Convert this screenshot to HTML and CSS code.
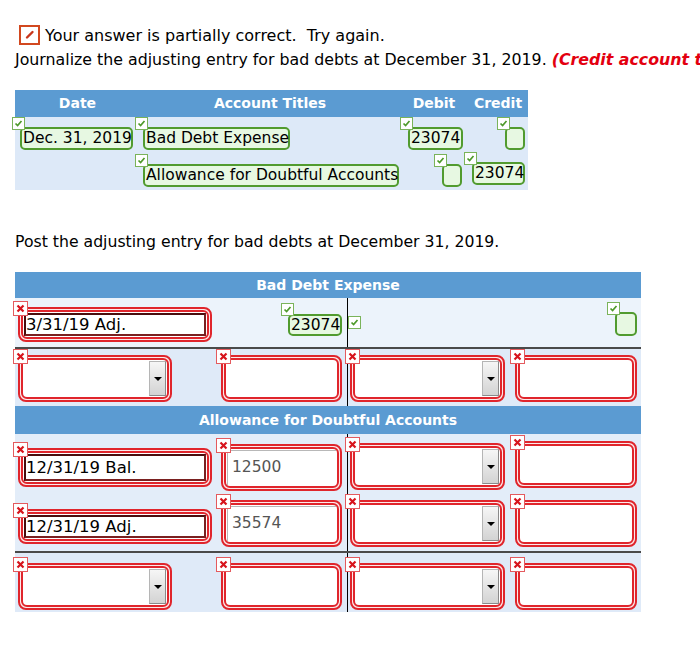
FILE: index.html
```html
<!DOCTYPE html>
<html>
<head>
<meta charset="utf-8">
<link rel="stylesheet" href="styles.css">
</head>
<body>
<div class="page">
  <div class="status">
    <span class="edit-ico"><svg width="17" height="16" viewBox="0 0 17 16"><line x1="6" y1="10.5" x2="11.5" y2="5" stroke="#c8361c" stroke-width="2.4" stroke-linecap="round"/></svg></span>
    <span>Your answer is partially correct.&nbsp; Try again.</span>
  </div>
  <div class="q">Journalize the adjusting entry for bad debts at December 31, 2019. <em class="hint">(Credit account titles are automatically indented when amount is entered. Do not indent manually.)</em></div>

  <div class="journal">
    <div class="jh">Date</div>
    <div class="jh">Account Titles</div>
    <div class="jh">Debit</div>
    <div class="jh">Credit</div>

    <div class="jc"><div class="g r1 w-date ml5"><i class="ok"></i>Dec. 31, 2019</div></div>
    <div class="jc"><div class="g r1 w-bad ml3"><i class="ok"></i>Bad Debt Expense</div></div>
    <div class="jc"><div class="g r1 w-deb1 ml8"><i class="ok"></i>23074</div></div>
    <div class="jc"><div class="g r1 w-cr1 ml37"><i class="ok"></i></div></div>

    <div class="jc"></div>
    <div class="jc"><div class="g r2 w-allow ml3"><i class="ok"></i>Allowance for Doubtful Accounts</div></div>
    <div class="jc"><div class="g r2 w-deb2 ml42"><i class="ok"></i></div></div>
    <div class="jc"><div class="g r2b w-cr2 ml4"><i class="ok"></i>23074</div></div>
  </div>

  <p class="post">Post the adjusting entry for bad debts at December 31, 2019.</p>

  <div class="tacct">
    <div class="th">Bad Debt Expense</div>

    <div class="trow ra">
      <div class="tc c1"><div class="ring w-txt mb5"><i class="bad"></i><div class="ring2"><div class="txt">3/31/19 Adj.</div></div></div></div>
      <div class="tc c2"><div class="g tg w-tg"><i class="ok ok-t"></i>23074</div></div>
      <div class="tc c3"><i class="ok ok-line"></i></div>
      <div class="tc c4"><div class="g tg2"><i class="ok"></i></div></div>
    </div>
    <div class="tline"></div>

    <div class="trow rb">
      <div class="tc c1"><div class="ring w-sel1 mb4"><i class="bad"></i><div class="ring2"><div class="sel"><span class="btn"></span></div></div></div></div>
      <div class="tc c2"><div class="ring w-mid mb4"><i class="bad"></i><div class="ring2"><div class="inp"></div></div></div></div>
      <div class="tc c3"><div class="ring w-sel2 mb4"><i class="bad"></i><div class="ring2"><div class="sel"><span class="btn"></span></div></div></div></div>
      <div class="tc c4"><div class="ring w-right mb4"><i class="bad"></i><div class="ring2"><div class="inp"></div></div></div></div>
    </div>

    <div class="th th2">Allowance for Doubtful Accounts</div>

    <div class="trow rc">
      <div class="tc c1"><div class="ring w-txt mb5"><i class="bad"></i><div class="ring2"><div class="txt tall">12/31/19 Bal.</div></div></div></div>
      <div class="tc c2"><div class="ring w-mid mb1"><i class="bad"></i><div class="ring2"><div class="inp val">12500</div></div></div></div>
      <div class="tc c3"><div class="ring w-sel2 mb2"><i class="bad"></i><div class="ring2"><div class="sel"><span class="btn"></span></div></div></div></div>
      <div class="tc c4"><div class="ring w-right mb4"><i class="bad"></i><div class="ring2"><div class="inp"></div></div></div></div>
    </div>

    <div class="trow rd">
      <div class="tc c1"><div class="ring w-txt mb7"><i class="bad"></i><div class="ring2"><div class="txt">12/31/19 Adj.</div></div></div></div>
      <div class="tc c2"><div class="ring w-mid mb4"><i class="bad"></i><div class="ring2"><div class="inp val">35574</div></div></div></div>
      <div class="tc c3"><div class="ring w-sel2 mb4"><i class="bad"></i><div class="ring2"><div class="sel"><span class="btn"></span></div></div></div></div>
      <div class="tc c4"><div class="ring w-right mb4"><i class="bad"></i><div class="ring2"><div class="inp"></div></div></div></div>
    </div>
    <div class="tline"></div>

    <div class="trow re">
      <div class="tc c1"><div class="ring w-sel1 mb2"><i class="bad"></i><div class="ring2"><div class="sel"><span class="btn"></span></div></div></div></div>
      <div class="tc c2"><div class="ring w-mid mb2"><i class="bad"></i><div class="ring2"><div class="inp"></div></div></div></div>
      <div class="tc c3"><div class="ring w-sel2 mb2"><i class="bad"></i><div class="ring2"><div class="sel"><span class="btn"></span></div></div></div></div>
      <div class="tc c4"><div class="ring w-right mb2"><i class="bad"></i><div class="ring2"><div class="inp"></div></div></div></div>
    </div>
  </div>
</div>
</body>
</html>
```

FILE: styles.css
```css
html, body {
  margin: 0;
  padding: 0;
  background: #fff;
  overflow: hidden;
}
body {
  font-family: "DejaVu Sans", Verdana, sans-serif;
  color: #000;
}
.page {
  width: 700px;
  height: 649px;
  overflow: hidden;
}

/* status line */
.status {
  display: flex;
  align-items: center;
  gap: 5px;
  height: 20px;
  margin: 25px 0 0 19px;
  font-size: 16px;
  white-space: nowrap;
}
.edit-ico {
  width: 21px;
  height: 20px;
  box-sizing: border-box;
  border: 2px solid #d2481f;
  display: flex;
  background: #fff;
}
.q {
  margin: 5px 0 0 15px;
  height: 20px;
  line-height: 20px;
  font-size: 15.8px;
  white-space: nowrap;
}
.hint {
  color: #e3000f;
  font-weight: bold;
  font-style: italic;
}

/* journal table */
.journal {
  display: grid;
  grid-template-columns: 125px 260px 68px 60px;
  grid-template-rows: 27px 36px 37px;
  width: 513px;
  margin: 20px 0 0 15px;
  background: #dde9f8;
}
.jh {
  background: #5b9bd2;
  color: #fff;
  font-weight: bold;
  font-size: 14px;
  line-height: 27px;
  text-align: center;
}
.jc {
  position: relative;
}

/* green (correct) field */
.g {
  position: relative;
  box-sizing: border-box;
  height: 23px;
  border: 2px solid #519b2f;
  border-radius: 5px;
  background: #e7f8e2;
  font-size: 15.5px;
  line-height: 19px;
  padding-left: 1px;
  white-space: nowrap;
}
.r1 { margin-top: 10px; }
.r2 { margin-top: 11px; }
.r2b { margin-top: 9px; }
.w-date { width: 113px; }
.w-bad { width: 147px; }
.w-deb1 { width: 55px; }
.w-cr1 { width: 20px; }
.w-allow { width: 256px; }
.w-deb2 { width: 20px; }
.w-cr2 { width: 53px; }
.ml3 { margin-left: 3px; }
.ml4 { margin-left: 4px; }
.ml5 { margin-left: 5px; }
.ml8 { margin-left: 8px; }
.ml37 { margin-left: 37px; }
.ml42 { margin-left: 42px; }

.ok {
  position: absolute;
  left: -10px;
  top: -12px;
  width: 13px;
  height: 13px;
  box-sizing: border-box;
  border: 1px solid #7ab35a;
  background: #fff url("data:image/svg+xml;utf8,<svg xmlns='http://www.w3.org/2000/svg' width='11' height='11' viewBox='0 0 11 11'><polyline points='2.5,5.5 4.6,7.6 8.5,3' fill='none' stroke='%234e9a2a' stroke-width='1.7'/></svg>") no-repeat center;
}

.post {
  margin: 42px 0 0 15px;
  height: 20px;
  line-height: 20px;
  font-size: 15.7px;
}

/* T account */
.tacct {
  width: 626px;
  margin: 20px 0 0 15px;
}
.th {
  height: 26px;
  line-height: 26px;
  background: #5b9bd2;
  color: #fff;
  font-weight: bold;
  font-size: 14px;
  text-align: center;
}
.th2 {
  height: 28px;
  line-height: 28px;
}
.tline {
  height: 2px;
  background: #4a4a4a;
}
.trow {
  display: grid;
  grid-template-columns: 200px 132px 163px 131px;
}
.ra { height: 49px; background: #ecf3fb; }
.rb { height: 57px; background: #dfeaf8; }
.rc { height: 58px; background: #e3edf9; }
.rd { height: 59px; background: #e3edf9; }
.re { height: 59px; background: #dfeaf8; }

.tc {
  display: flex;
  align-items: flex-end;
  box-sizing: border-box;
}
.c1 { padding-left: 3px; }
.c2 { padding-left: 6px; }
.c3 { padding-left: 2px; border-left: 1px solid #000; }
.c4 { padding-left: 5px; }

/* red (incorrect) field */
.ring {
  position: relative;
  box-sizing: border-box;
  border: 2px solid #e0252c;
  border-radius: 8px;
  padding: 1px;
  background: #fce9ea;
}
.ring2 {
  border: 2px solid #e0252c;
  border-radius: 6px;
  padding: 1px;
  background: #fff;
}
.w-txt { width: 194px; }
.w-sel1 { width: 154px; }
.w-mid { width: 121px; }
.w-sel2 { width: 155px; }
.w-right { width: 122px; }
.mb1 { margin-bottom: 1px; }
.mb2 { margin-bottom: 2px; }
.mb4 { margin-bottom: 4px; }
.mb5 { margin-bottom: 5px; }
.mb7 { margin-bottom: 7px; }

.bad {
  position: absolute;
  left: -7px;
  top: -8px;
  width: 15px;
  height: 15px;
  box-sizing: border-box;
  border: 1px solid #e45a5e;
  background: #fff url("data:image/svg+xml;utf8,<svg xmlns='http://www.w3.org/2000/svg' width='9' height='9' viewBox='0 0 9 9'><path d='M1.5 1.5 L7.5 7.5 M7.5 1.5 L1.5 7.5' fill='none' stroke='%23d7141c' stroke-width='2.2'/></svg>") no-repeat center;
  z-index: 2;
}

.txt {
  box-sizing: border-box;
  height: 23px;
  border: 2px solid #4a0d0d;
  border-right-color: #7a2020;
  border-bottom-color: #7a2020;
  background: #fff;
  font-size: 16.5px;
  line-height: 19px;
  white-space: nowrap;
}
.txt.tall {
  height: 27px;
  line-height: 23px;
}
.sel {
  height: 35px;
  background: #fff;
  display: flex;
  justify-content: flex-end;
}
.btn {
  width: 17px;
  box-sizing: border-box;
  border: 1px solid #b5b5b5;
  border-right-color: #8a8a8a;
  border-bottom-color: #8a8a8a;
  background: linear-gradient(#f6f6f6, #d3d3d3);
  display: flex;
  align-items: center;
  justify-content: center;
}
.btn::after {
  content: "";
  width: 0;
  height: 0;
  border-left: 4px solid transparent;
  border-right: 4px solid transparent;
  border-top: 4px solid #000;
}
.inp {
  height: 35px;
  background: #fff;
}
.inp.val {
  box-sizing: border-box;
  border-left: 1px solid #b8b8b8;
  border-top: 1px solid #b8b8b8;
  color: #555;
  font-size: 15.5px;
  line-height: 33px;
  padding-left: 4px;
}

/* T-account green fields */
.tg {
  width: 54px;
  height: 22px;
  line-height: 18px;
  margin: 0 0 11px 67px;
}
.ok-t { left: -9px; top: -13px; }
.ok-line {
  position: static;
  display: block;
  margin: 0 0 18px -2px;
}
.tg2 {
  width: 22px;
  height: 24px;
  margin: 0 0 11px 100px;
}
```
